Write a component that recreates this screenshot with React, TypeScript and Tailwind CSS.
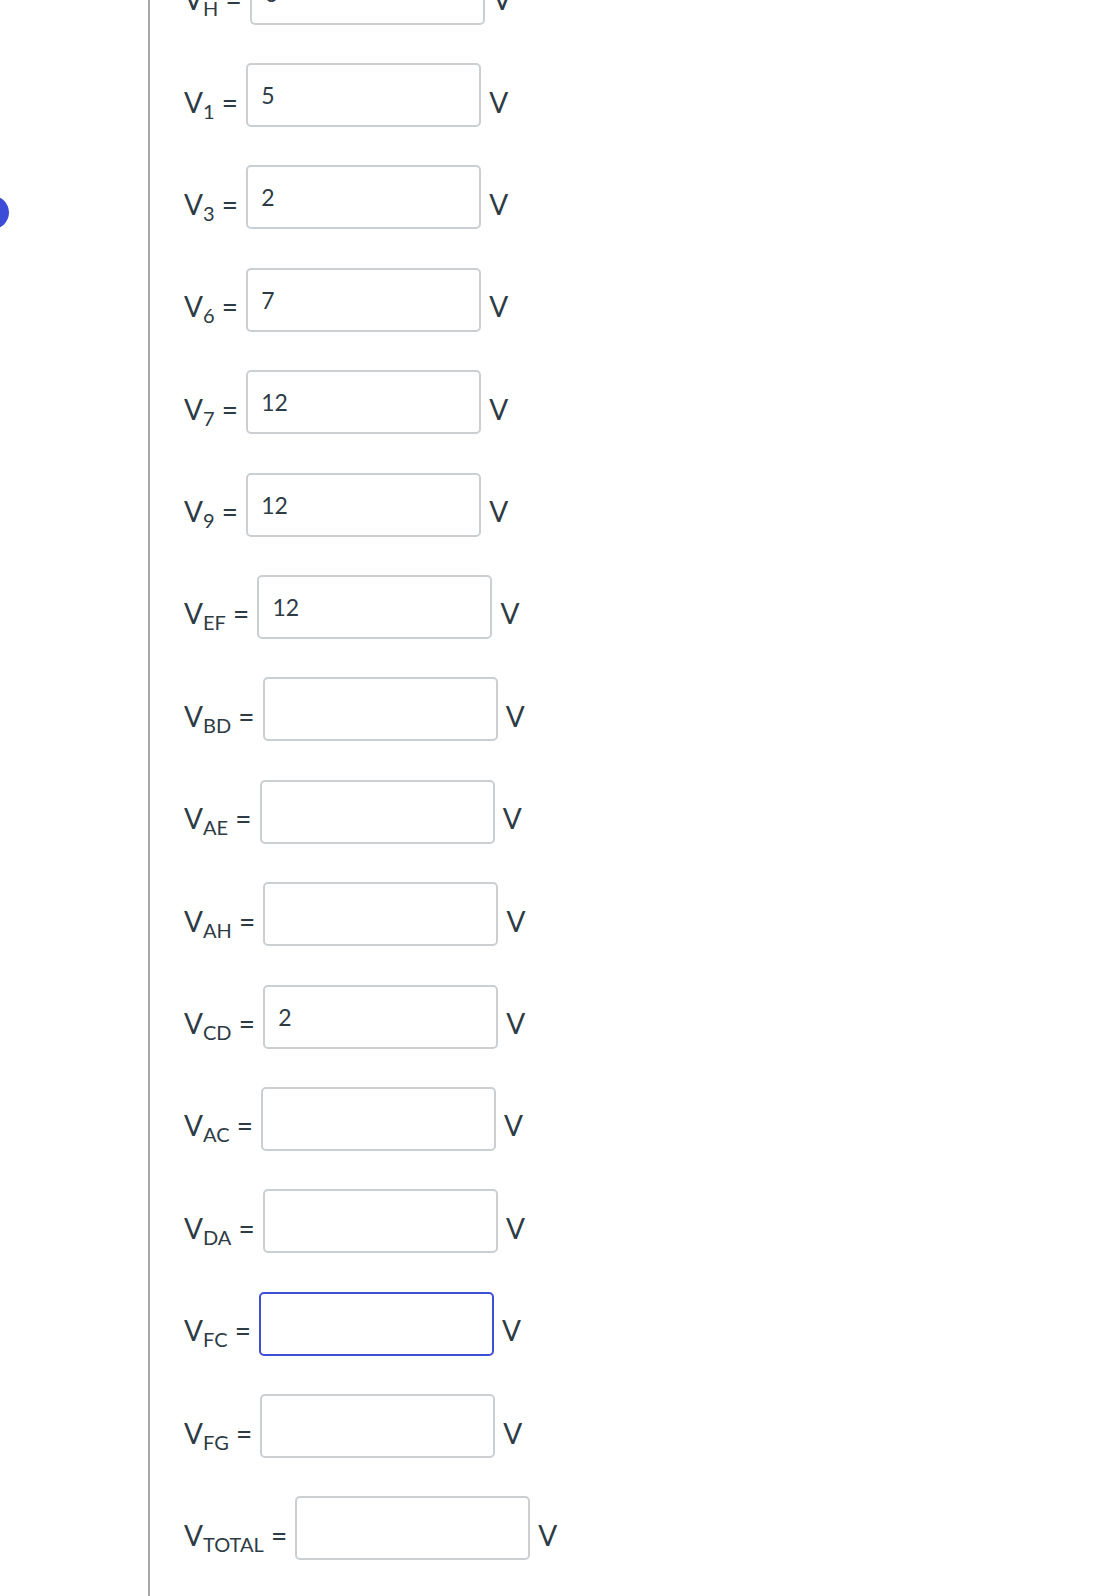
import React from "react";

type Row = { sub: string; value: string; focused?: boolean };

const rows: Row[] = [
  { sub: "H", value: "0" },
  { sub: "1", value: "5" },
  { sub: "3", value: "2" },
  { sub: "6", value: "7" },
  { sub: "7", value: "12" },
  { sub: "9", value: "12" },
  { sub: "EF", value: "12" },
  { sub: "BD", value: "" },
  { sub: "AE", value: "" },
  { sub: "AH", value: "" },
  { sub: "CD", value: "2" },
  { sub: "AC", value: "" },
  { sub: "DA", value: "" },
  { sub: "FC", value: "", focused: true },
  { sub: "FG", value: "" },
  { sub: "TOTAL", value: "" },
];

function VoltageRow({ sub, value, focused }: Row) {
  return (
    <div className="flex items-center">
      <span className="mt-[13px] text-[28px] whitespace-pre">
        V<sub className="text-[20px] bottom-[-6px]">{sub}</sub> ={" "}
      </span>
      <input
        type="text"
        defaultValue={value}
        readOnly
        className={
          focused
            ? "ml-[1px] h-[64px] w-[235px] rounded-[5px] border-2 border-[#3f4fd5] bg-white pl-[13px] text-[23px] text-[#2d3b45] outline-none"
            : "ml-[1px] h-[64px] w-[235px] rounded-[5px] border-2 border-[#cbcfd2] bg-white pl-[13px] text-[23px] text-[#2d3b45] outline-none"
        }
      />
      <span className="mt-[13px] ml-[8px] text-[28px]">V</span>
    </div>
  );
}

export default function App() {
  return (
    <div className="relative h-[1596px] w-[1104px] overflow-hidden bg-white font-['Lato',sans-serif] text-[#2d3b45]">
      {/* step marker peeking in from the left */}
      <span className="absolute left-[-24px] top-[196px] block h-[33px] w-[33px] rounded-full bg-[#3c4bd8]" />

      <div className="ml-[148px] flex h-full flex-col border-l-2 border-[#a8a8a8] pl-[34px]">
        <div className="mt-[-39.4px] flex flex-col gap-[38.4px]">
          {rows.map((r) => (
            <VoltageRow key={r.sub} {...r} />
          ))}
        </div>
      </div>
    </div>
  );
}
